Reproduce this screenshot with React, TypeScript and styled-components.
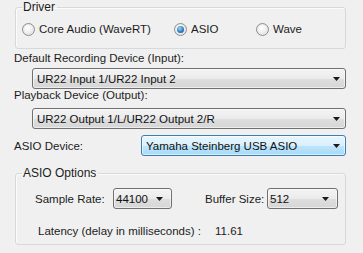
import React from "react";
import styled, { createGlobalStyle } from "styled-components";

const GlobalStyle = createGlobalStyle`
  html, body {
    margin: 0;
    padding: 0;
    background: #f0f0f0;
  }
  body {
    font-family: "Liberation Sans", Arial, sans-serif;
    font-size: 11.5px;
    color: #1c1c1c;
  }
`;

const Panel = styled.div`
  width: 363px;
  height: 253px;
  box-sizing: border-box;
  padding-left: 14px;
  display: flex;
  flex-direction: column;
  background: #f0f0f0;
  overflow: hidden;
`;

const Group = styled.fieldset<{ $top?: number }>`
  margin: ${(p) => p.$top ?? 0}px 0 0 1px;
  width: 331px;
  box-sizing: border-box;
  border: 1px solid #d5d9dc;
  border-radius: 3px;
  padding: 0 6px;
  box-shadow: inset 1px 1px 0 #fbfbfb;
`;

const Legend = styled.legend`
  padding: 0 2px 0 1px;
  line-height: 14px;
  font-size: 12px;
  color: #1c1c1c;
`;

const RadioRow = styled.div`
  display: flex;
  align-items: center;
  height: 16px;
  padding: 7px 0 11px;
`;

const RadioOption = styled.label<{ $width?: number }>`
  display: flex;
  align-items: center;
  gap: 4px;
  width: ${(p) => (p.$width ? `${p.$width}px` : "auto")};
`;

const RadioCircle = styled.span<{ $checked?: boolean }>`
  position: relative;
  width: 11px;
  height: 11px;
  border-radius: 50%;
  border: 1px solid #8c8f91;
  background: radial-gradient(circle at 40% 35%, #ffffff 0%, #f1f1f1 45%, #cfd0d1 100%);
  box-shadow: inset 0 0 0 1px #e8e8e8;
  flex: none;

  &::after {
    content: "";
    display: ${(p) => (p.$checked ? "block" : "none")};
    position: absolute;
    left: 2px;
    top: 2px;
    width: 7px;
    height: 7px;
    border-radius: 50%;
    background: radial-gradient(circle at 40% 35%, #9fd4f6 0%, #2f7fc6 55%, #10468c 100%);
  }
`;

const FieldLabel = styled.div<{ $top?: number }>`
  margin-top: ${(p) => p.$top ?? 0}px;
  line-height: 13px;
`;

const Combo = styled.div<{ $width: number; $left?: number; $top?: number; $active?: boolean; $pad?: number }>`
  display: flex;
  align-items: center;
  justify-content: space-between;
  box-sizing: border-box;
  width: ${(p) => p.$width}px;
  height: 21px;
  margin: ${(p) => p.$top ?? 0}px 0 0 ${(p) => p.$left ?? 0}px;
  padding: 0 ${(p) => p.$pad ?? 5}px 0 ${(p) => (p.$pad === undefined ? 4 : 2)}px;
  border: 1px solid ${(p) => (p.$active ? "#3c7fb1" : "#707070")};
  border-radius: 3px;
  background: ${(p) =>
    p.$active
      ? "linear-gradient(#eaf6fd 0%, #d9f0fc 50%, #bee6fd 51%, #a7d9f5 100%)"
      : "linear-gradient(#f4f4f4 0%, #ebebeb 50%, #dedede 51%, #d6d6d6 100%)"};
  box-shadow: inset 0 0 0 1px rgba(255, 255, 255, 0.55);
  color: #111;
  flex: none;
`;

const ComboText = styled.span`
  white-space: nowrap;
`;

const Arrow = () => (
  <svg width="7" height="4" viewBox="0 0 7 4">
    <polygon points="0,0 7,0 3.5,4" fill="#1a1a1a" />
  </svg>
);

const Row = styled.div<{ $top?: number }>`
  display: flex;
  align-items: center;
  margin-top: ${(p) => p.$top ?? 0}px;
`;

const RowLabel = styled.span<{ $width?: number; $left?: number }>`
  width: ${(p) => (p.$width ? `${p.$width}px` : "auto")};
  margin-left: ${(p) => p.$left ?? 0}px;
  flex: none;
`;

const OptionsBody = styled.div`
  padding: 8px 0 6px 13px;
`;

const Latency = styled.div`
  display: flex;
  margin: 16px 0 0 3px;
  line-height: 13px;
`;

const LatencyValue = styled.span`
  margin-left: 14px;
`;

const ComboBox = ({
  value,
  width,
  left,
  top,
  active,
  pad,
}: {
  value: string;
  width: number;
  left?: number;
  top?: number;
  active?: boolean;
  pad?: number;
}) => (
  <Combo $width={width} $left={left} $top={top} $active={active} $pad={pad}>
    <ComboText>{value}</ComboText>
    <Arrow />
  </Combo>
);

export default function App() {
  return (
    <>
      <GlobalStyle />
      <Panel>
        <Group>
          <Legend>Driver</Legend>
          <RadioRow>
            <RadioOption $width={152}>
              <RadioCircle />
              Core Audio (WaveRT)
            </RadioOption>
            <RadioOption $width={82}>
              <RadioCircle $checked />
              ASIO
            </RadioOption>
            <RadioOption>
              <RadioCircle />
              Wave
            </RadioOption>
          </RadioRow>
        </Group>

        <FieldLabel $top={3}>Default Recording Device (Input):</FieldLabel>
        <ComboBox value="UR22 Input 1/UR22 Input 2" width={314} left={18} top={3} />

        <FieldLabel>Playback Device (Output):</FieldLabel>
        <ComboBox value="UR22 Output 1/L/UR22 Output 2/R" width={314} left={18} top={6} />

        <Row $top={6}>
          <RowLabel $width={127}>ASIO Device:</RowLabel>
          <ComboBox value="Yamaha Steinberg USB ASIO" width={205} active />
        </Row>

        <Group $top={10}>
          <Legend>ASIO Options</Legend>
          <OptionsBody>
            <Row>
              <RowLabel $width={78}>Sample Rate:</RowLabel>
              <ComboBox value="44100" width={59} pad={8} />
              <RowLabel $width={62} $left={33}>Buffer Size:</RowLabel>
              <ComboBox value="512" width={71} pad={8} />
            </Row>
            <Latency>
              Latency (delay in milliseconds) :<LatencyValue>11.61</LatencyValue>
            </Latency>
          </OptionsBody>
        </Group>
      </Panel>
    </>
  );
}
